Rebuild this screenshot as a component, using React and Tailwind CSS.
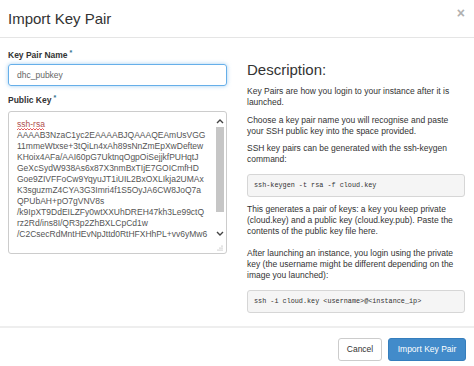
import React from 'react';

const keyLines = [
    'AAAAB3NzaC1yc2EAAAABJQAAAQEAmUsVGG',
    '11mmeWtxse+3tQiLn4xAh89sNnZmEpXwDeftew',
    'KHoix4AFa/AAI60pG7UktnqOgpOiSejjkfPUHqtJ',
    'GeXcSydW938As6x87X3nmBxTIjE7GOICmfHD',
    'Goe9ZIVFFoCw9YqyuJT1iUIL2BxOXLIkja2UMAx',
    'K3sguzmZ4CYA3G3Imri4f1S5OyJA6CW8JoQ7a',
    'QPUbAH+pO7gVNV8s',
    '/k9IpXT9DdEILZFy0wtXXUhDREH47kh3Le99ctQ',
    'rz2Rd/ins8I/QR3p2ZhBXLCpCd1w',
    '/C2CsecRdMntHEvNpJttd0RtHFXHhPL+vv6yMw6',
];

function Label({ children }) {
    return (
        <div className="text-[8.5px] font-bold leading-[11px] text-[#333]">
            {children}
            <span className="relative -top-[3px] ml-[2px] text-[7px] text-[#31708f]">*</span>
        </div>
    );
}

function Scrollbar() {
    return (
        <div className="absolute right-[1px] top-[1px] bottom-[1px] flex w-[11px] flex-col items-center bg-white">
            <svg width="8" height="6" viewBox="0 0 8 6" className="mt-[5px]">
                <path d="M1 5 L4 2 L7 5" fill="none" stroke="#444" strokeWidth="1.4" />
            </svg>
            <div className="mt-[3px] h-[85px] w-[8px] bg-[#c6c6c6]" />
            <svg width="8" height="6" viewBox="0 0 8 6" className="mt-[19px]">
                <path d="M1 1 L4 4 L7 1" fill="none" stroke="#444" strokeWidth="1.4" />
            </svg>
            <svg width="6" height="6" viewBox="0 0 6 6" className="mt-[8px]">
                <circle cx="5" cy="1" r="0.6" fill="#999" />
                <circle cx="5" cy="3" r="0.6" fill="#999" />
                <circle cx="3" cy="3" r="0.6" fill="#999" />
                <circle cx="5" cy="5" r="0.6" fill="#999" />
                <circle cx="3" cy="5" r="0.6" fill="#999" />
                <circle cx="1" cy="5" r="0.6" fill="#999" />
            </svg>
        </div>
    );
}

function Code({ children }) {
    return (
        <div className="flex h-[23px] items-center rounded-[3px] border border-[#d6d6d6] bg-[#f5f5f5] px-[6px] font-['Liberation_Mono',monospace] text-[6.8px] text-[#333]">
            {children}
        </div>
    );
}

export default function App() {
    return (
        <div className="flex h-[366px] w-[474px] flex-col bg-white font-['Liberation_Sans',Arial,sans-serif] text-[#333]">
            {/* header */}
            <div className="flex h-[38px] shrink-0 items-center justify-between border-b border-[#e5e5e5] pl-2 pr-[9px]">
                <span className="text-[15px] leading-[17px] text-[#333]">Import Key Pair</span>
                <span className="mb-[12px] text-[14px] font-bold leading-none text-[#b0b0b0]">×</span>
            </div>

            {/* body */}
            <div className="flex flex-1 gap-[20px] px-2">
                <div className="w-[219px] pt-[12px]">
                    <Label>Key Pair Name</Label>
                    <div className="mt-[3px] flex h-[22px] items-center rounded-[3px] border border-[#66afe9] px-[8px] text-[8.5px] text-[#666] shadow-[0_0_4px_rgba(102,175,233,0.6)]">
                        dhc_pubkey
                    </div>
                    <div className="mt-[9px]">
                        <Label>Public Key</Label>
                    </div>
                    <div className="relative mt-[5px] h-[143px] overflow-hidden rounded-[3px] border border-[#ccc] pl-[8px] pt-[7px] text-[8.5px] leading-[11px] text-[#555]">
                        <div className="h-[11px]">
                            <span className="relative inline-block text-[#b05050]">
                                ssh-rsa
                                <svg width="28" height="3" viewBox="0 0 28 3" className="absolute left-0 top-[9px]">
                                    <path d="M0 2 L1.5 0.5 L3 2 L4.5 0.5 L6 2 L7.5 0.5 L9 2 L10.5 0.5 L12 2 L13.5 0.5 L15 2 L16.5 0.5 L18 2 L19.5 0.5 L21 2 L22.5 0.5 L24 2 L25.5 0.5 L27 2" fill="none" stroke="#e03030" strokeWidth="0.8" />
                                </svg>
                            </span>
                        </div>
                        {keyLines.map((l) => (
                            <div key={l} className="whitespace-pre">{l}</div>
                        ))}
                        <Scrollbar />
                    </div>
                </div>

                <div className="w-[218px] pt-[23px] text-[8.5px] leading-[11px]">
                    <div className="text-[15px] leading-[17px] text-[#333]">Description:</div>
                    <p className="mt-[8px]">Key Pairs are how you login to your instance after it is launched.</p>
                    <p className="mt-[7px]">Choose a key pair name you will recognise and paste your SSH public key into the space provided.</p>
                    <p className="mt-[6px]">SSH key pairs can be generated with the ssh-keygen command:</p>
                    <div className="mt-[9px]">
                        <Code>ssh-keygen -t rsa -f cloud.key</Code>
                    </div>
                    <p className="mt-[7px]">This generates a pair of keys: a key you keep private (cloud.key) and a public key (cloud.key.pub). Paste the contents of the public key file here.</p>
                    <p className="mt-[11px]">After launching an instance, you login using the private key (the username might be different depending on the image you launched):</p>
                    <div className="mt-[9px]">
                        <Code>ssh -i cloud.key &lt;username&gt;@&lt;instance_ip&gt;</Code>
                    </div>
                </div>
            </div>

            {/* footer */}
            <div className="flex h-[40px] shrink-0 items-start justify-end gap-[6px] border-t-2 border-[#eee] pr-2 pt-[10px]">
                <button className="h-[23px] w-[44px] rounded-[3px] border border-[#ccc] bg-white text-[8.5px] text-[#333]">
                    Cancel
                </button>
                <button className="h-[23px] w-[78px] rounded-[3px] border border-[#357ebd] bg-[#428bca] text-[8.5px] text-white">
                    Import Key Pair
                </button>
            </div>
        </div>
    );
}
